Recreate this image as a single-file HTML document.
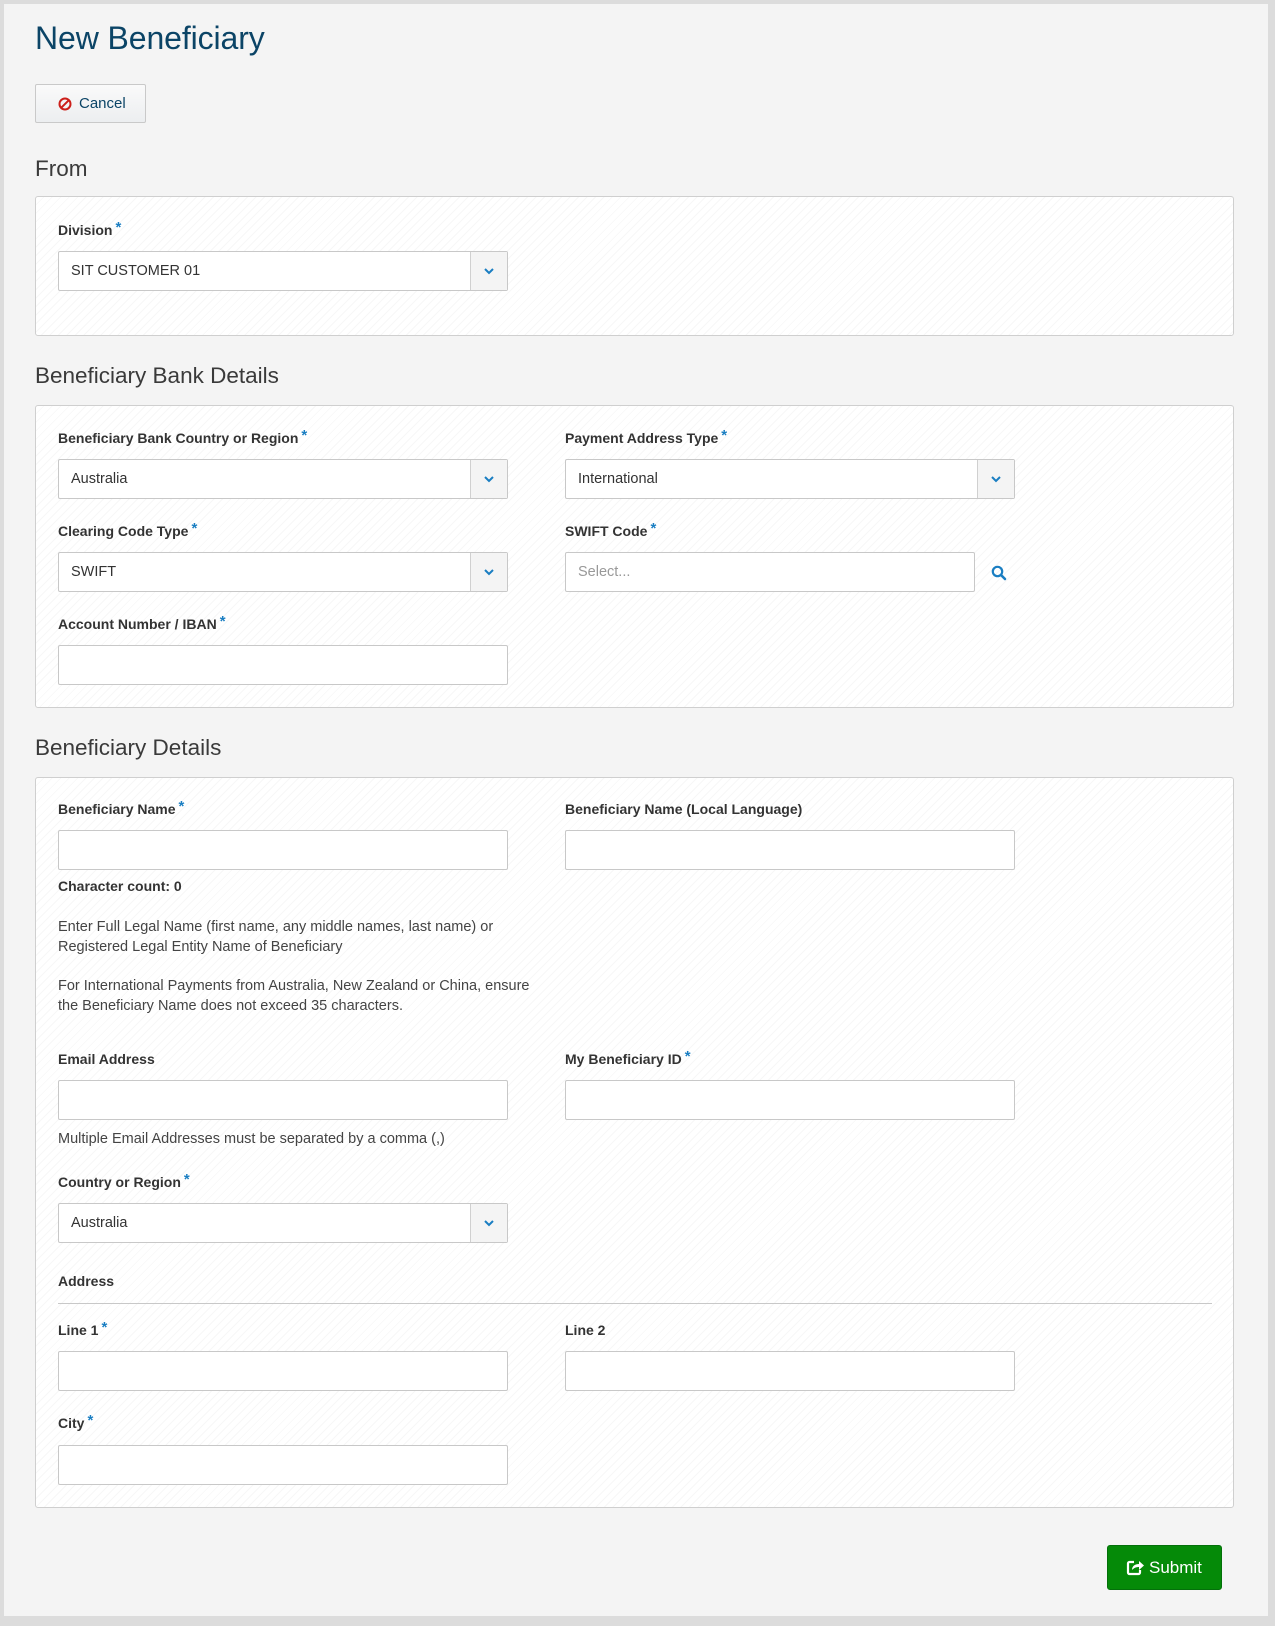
<!DOCTYPE html>
<html><head><meta charset="utf-8"><style>
*{box-sizing:border-box;margin:0;padding:0}
body{width:1275px;height:1626px;background:#dcdcdc;font-family:"Liberation Sans",sans-serif;color:#333;position:relative;overflow:hidden}
#page{position:absolute;left:4px;top:4px;width:1264px;height:1612px;background:#f4f4f4}
.a{position:absolute}
h1{position:absolute;left:35px;top:20px;font-size:32px;font-weight:normal;color:#0b4466;letter-spacing:-0.1px}
.h2{position:absolute;left:35px;font-size:22.5px;color:#3a3a3a}
.panel{position:absolute;left:35px;width:1199px;border:1px solid #cfcfcf;border-radius:3px;background:repeating-linear-gradient(135deg,#fff 0,#fff 5px,#f7f7f7 5px,#f7f7f7 6px)}
.lbl{position:absolute;font-size:14px;font-weight:bold;color:#333;letter-spacing:0px}
.lbl i{color:#1a7ec2;font-style:normal;font-size:15px;position:relative;top:-3px;margin-left:3px}
.in{position:absolute;height:40px;border:1px solid #c8c8c8;border-radius:2px;background:#fff;font-size:14.5px;padding:11px 12px;color:#333}
.sel .arr{position:absolute;right:0;top:0;width:37px;height:38px;border-left:1px solid #d0d0d0;background:#f4f4f4}
.sel .arr svg{position:absolute;left:13px;top:15px}
.txt{position:absolute;font-size:14.5px;color:#444;line-height:20px}
</style></head><body>
<div id="page"></div>
<h1>New Beneficiary</h1>
<div class="a" style="left:35px;top:84px;width:111px;height:39px;border:1px solid #c9c9c9;border-radius:2px;background:linear-gradient(#fafafa,#eceef0)">
<svg class="a" style="left:22px;top:12px" width="14" height="14" viewBox="0 0 14 14"><circle cx="7" cy="7" r="5.5" fill="none" stroke="#cc1f1a" stroke-width="2"/><line x1="3.3" y1="10.7" x2="10.7" y2="3.3" stroke="#cc1f1a" stroke-width="2"/></svg>
<span class="a" style="left:43px;top:10px;font-size:15px;color:#0b4466">Cancel</span></div>

<div class="h2" style="top:156px">From</div>
<div class="panel" style="top:196px;height:140px"></div>
<div class="lbl" style="left:58px;top:222px">Division<i>*</i></div>
<div class="in sel" style="left:58px;top:251px;width:450px">SIT CUSTOMER 01<div class="arr"><svg width="10" height="8"><path d="M1 2l4 4 4-4" fill="none" stroke="#1a7ec2" stroke-width="2"/></svg></div></div>

<div class="h2" style="top:363px">Beneficiary Bank Details</div>
<div class="panel" style="top:405px;height:303px"></div>
<div class="lbl" style="left:58px;top:430px">Beneficiary Bank Country or Region<i>*</i></div>
<div class="in sel" style="left:58px;top:459px;width:450px">Australia<div class="arr"><svg width="10" height="8"><path d="M1 2l4 4 4-4" fill="none" stroke="#1a7ec2" stroke-width="2"/></svg></div></div>
<div class="lbl" style="left:565px;top:430px">Payment Address Type<i>*</i></div>
<div class="in sel" style="left:565px;top:459px;width:450px">International<div class="arr"><svg width="10" height="8"><path d="M1 2l4 4 4-4" fill="none" stroke="#1a7ec2" stroke-width="2"/></svg></div></div>
<div class="lbl" style="left:58px;top:523px">Clearing Code Type<i>*</i></div>
<div class="in sel" style="left:58px;top:552px;width:450px">SWIFT<div class="arr"><svg width="10" height="8"><path d="M1 2l4 4 4-4" fill="none" stroke="#1a7ec2" stroke-width="2"/></svg></div></div>
<div class="lbl" style="left:565px;top:523px">SWIFT Code<i>*</i></div>
<div class="in" style="left:565px;top:552px;width:410px;color:#999">Select...</div>
<svg class="a" style="left:991px;top:565px" width="16" height="16" viewBox="0 0 16 16"><circle cx="6.5" cy="6.5" r="4.7" fill="none" stroke="#1a7ec2" stroke-width="2.2"/><line x1="10" y1="10" x2="14" y2="14" stroke="#1a7ec2" stroke-width="2.6" stroke-linecap="round"/></svg>
<div class="lbl" style="left:58px;top:616px">Account Number / IBAN<i>*</i></div>
<div class="in" style="left:58px;top:645px;width:450px"></div>

<div class="h2" style="top:735px">Beneficiary Details</div>
<div class="panel" style="top:777px;height:731px"></div>
<div class="lbl" style="left:58px;top:801px">Beneficiary Name<i>*</i></div>
<div class="in" style="left:58px;top:830px;width:450px"></div>
<div class="lbl" style="left:565px;top:801px">Beneficiary Name (Local Language)</div>
<div class="in" style="left:565px;top:830px;width:450px"></div>
<div class="lbl" style="left:58px;top:878px">Character count: 0</div>
<div class="txt" style="left:58px;top:917px">Enter Full Legal Name (first name, any middle names, last name) or<br>Registered Legal Entity Name of Beneficiary</div>
<div class="txt" style="left:58px;top:976px">For International Payments from Australia, New Zealand or China, ensure<br>the Beneficiary Name does not exceed 35 characters.</div>
<div class="lbl" style="left:58px;top:1051px">Email Address</div>
<div class="in" style="left:58px;top:1080px;width:450px"></div>
<div class="lbl" style="left:565px;top:1051px">My Beneficiary ID<i>*</i></div>
<div class="in" style="left:565px;top:1080px;width:450px"></div>
<div class="txt" style="left:58px;top:1129px">Multiple Email Addresses must be separated by a comma (,)</div>
<div class="lbl" style="left:58px;top:1174px">Country or Region<i>*</i></div>
<div class="in sel" style="left:58px;top:1203px;width:450px">Australia<div class="arr"><svg width="10" height="8"><path d="M1 2l4 4 4-4" fill="none" stroke="#1a7ec2" stroke-width="2"/></svg></div></div>
<div class="lbl" style="left:58px;top:1273px">Address</div>
<div class="a" style="left:58px;top:1303px;width:1154px;height:1px;background:#c8c8c8"></div>
<div class="lbl" style="left:58px;top:1322px">Line 1<i>*</i></div>
<div class="in" style="left:58px;top:1351px;width:450px"></div>
<div class="lbl" style="left:565px;top:1322px">Line 2</div>
<div class="in" style="left:565px;top:1351px;width:450px"></div>
<div class="lbl" style="left:58px;top:1415px">City<i>*</i></div>
<div class="in" style="left:58px;top:1445px;width:450px"></div>

<div class="a" style="left:1107px;top:1545px;width:115px;height:45px;background:#058a08;border:1px solid #04700a;border-radius:3px">
<svg class="a" style="left:18px;top:13px" width="18" height="17" viewBox="0 0 18 17"><path d="M8 3H3.5A1.5 1.5 0 0 0 2 4.5v9A1.5 1.5 0 0 0 3.5 15h9a1.5 1.5 0 0 0 1.5-1.5V11" fill="none" stroke="#fff" stroke-width="2.2"/><path d="M6 11c0-4 3-6 7-6V2l5 4.5-5 4.5V8c-3 0-5 1-7 3z" fill="#fff"/></svg>
<span class="a" style="left:41px;top:12px;font-size:17px;color:#fff">Submit</span></div>
</body></html>
